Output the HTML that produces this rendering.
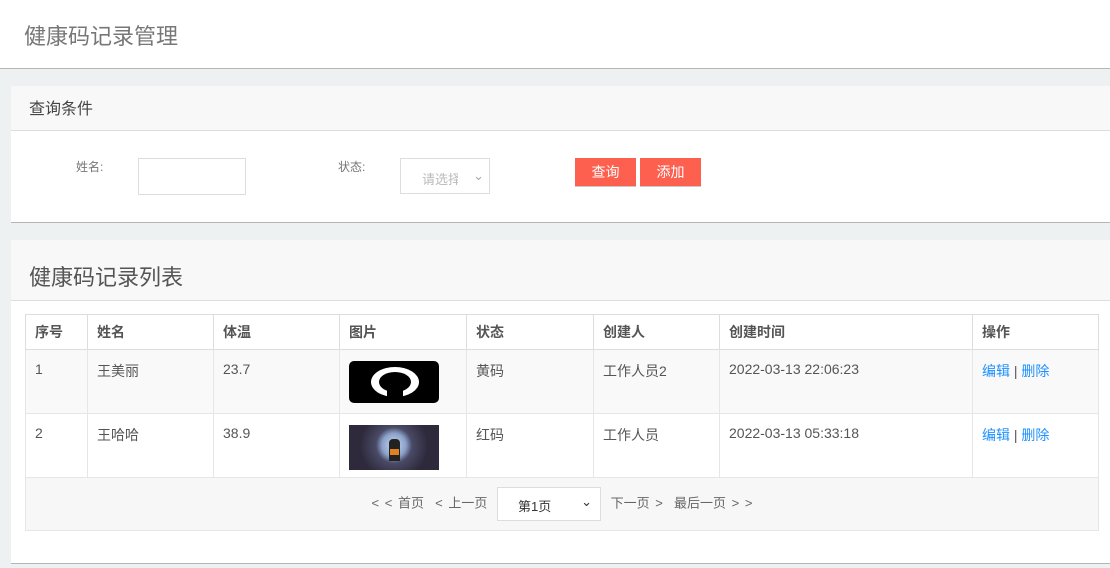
<!DOCTYPE html>
<html><head><meta charset="utf-8"><style>
*{box-sizing:border-box;margin:0;padding:0}
body{width:1110px;height:568px;background:#eef1f2;font-family:"Liberation Sans","Noto Sans CJK SC",sans-serif;color:#555;position:relative;overflow:hidden}
.hd{position:absolute;left:0;top:0;width:1110px;height:69px;background:#fff;border-bottom:1px solid #b5b5b5}
.hd h1{position:absolute;left:24px;top:19px;font-size:22px;font-weight:normal;color:#777}
.p1{position:absolute;left:11px;top:86px;width:1099px;height:137px;background:#fff;border-bottom:1px solid #b5b5b5}
.p1 .ph{height:45px;background:#f8f8f8;border-bottom:1px solid #ddd;padding:9px 0 0 18px;font-size:16px;color:#444}
.lbl{position:absolute;font-size:12px;color:#777}
.inp{position:absolute;border:1px solid #ddd;background:#fff}
.btn{position:absolute;top:72px;height:29px;width:61px;background:#fe6050;color:#fff;font-size:14px;text-align:center;line-height:29px;border-bottom:1px solid #c9c9c9}
.p2{position:absolute;left:11px;top:240px;width:1099px;height:324px;background:#fff;border-bottom:1px solid #b5b5b5}
.p2 .ph{height:61px;background:#f8f8f8;border-bottom:1px solid #ddd;padding:20px 0 0 18px;font-size:22px;color:#555}
table{position:absolute;left:14px;top:74px;border-collapse:collapse;font-size:14px}
td,th{border:1px solid #e6e6e6;text-align:left;vertical-align:top;padding:0 0 0 9px}
th{height:35px;vertical-align:middle;font-weight:bold;color:#555;background:#fff;border-color:#ddd}
tr.r td{height:64px;padding-top:11px}
tr.a td{background:#f9f9f9}
.pg{background:#f7f7f7;height:53px;text-align:center;font-size:13px;color:#666}
a{color:#1e90ff;text-decoration:none}
</style></head><body>
<div class="hd"><h1>健康码记录管理</h1></div>
<div class="p1"><div class="ph">查询条件</div>
<div class="lbl" style="left:65px;top:72px">姓名:</div>
<div class="inp" style="left:127px;top:72px;width:108px;height:37px"></div>
<div class="lbl" style="left:327px;top:72px">状态:</div>
<div class="inp" style="left:389px;top:72px;width:90px;height:36px;font-size:13px;color:#bbb;padding:10px 0 0 21px;overflow:hidden;white-space:nowrap"><span style="display:inline-block;width:36px;overflow:hidden;vertical-align:top">请选择</span><span style="position:absolute;right:5px;top:9px;color:#aaa">⌄</span></div>
<div class="btn" style="left:564px">查询</div>
<div class="btn" style="left:629px">添加</div>
</div>
<div class="p2"><div class="ph">健康码记录列表</div>
<table>
<tr><th style="width:62px">序号</th><th style="width:126px">姓名</th><th style="width:126px">体温</th><th style="width:127px">图片</th><th style="width:127px">状态</th><th style="width:126px">创建人</th><th style="width:253px">创建时间</th><th style="width:126px">操作</th></tr>
<tr class="r a"><td>1</td><td>王美丽</td><td>23.7</td><td style="padding-top:11px"><div style="width:90px;height:42px;background:#000;border-radius:5px;position:relative;overflow:hidden"><div style="position:absolute;left:22px;top:6px;width:48px;height:30px;border-radius:50%;background:#fff"></div><div style="position:absolute;left:30px;top:11px;width:32px;height:20px;border-radius:50%;background:#000"></div><div style="position:absolute;left:38px;top:24px;width:16px;height:18px;background:#000"></div></div></td><td>黄码</td><td>工作人员2</td><td>2022-03-13 22:06:23</td><td><a>编辑</a> | <a>删除</a></td></tr>
<tr class="r"><td>2</td><td>王哈哈</td><td>38.9</td><td><div style="width:90px;height:45px;background:radial-gradient(circle at 50% 45%,#c8d8f0 0,#8aa0c8 12px,#4a4a66 18px,#2e2a3c 34px);position:relative"><div style="position:absolute;left:40px;top:14px;width:11px;height:22px;background:#222;border-radius:4px 4px 0 0"></div><div style="position:absolute;left:41px;top:24px;width:9px;height:6px;background:#e08020"></div></div></td><td>红码</td><td>工作人员</td><td>2022-03-13 05:33:18</td><td><a>编辑</a> | <a>删除</a></td></tr>
<tr><td colspan="8" class="pg" style="padding:9px 0 0 0;word-spacing:2px">&lt; &lt; 首页 &nbsp;&lt; 上一页 <span style="display:inline-block;width:104px;height:34px;border:1px solid #ddd;background:#fff;vertical-align:middle;text-align:left;padding:8px 0 0 20px;color:#333;margin:0 4px;position:relative">第1页<span style="position:absolute;right:8px;top:6px">⌄</span></span> 下一页 &gt; &nbsp;最后一页 &gt; &gt;</td></tr>
</table>
</div>
</body></html>
